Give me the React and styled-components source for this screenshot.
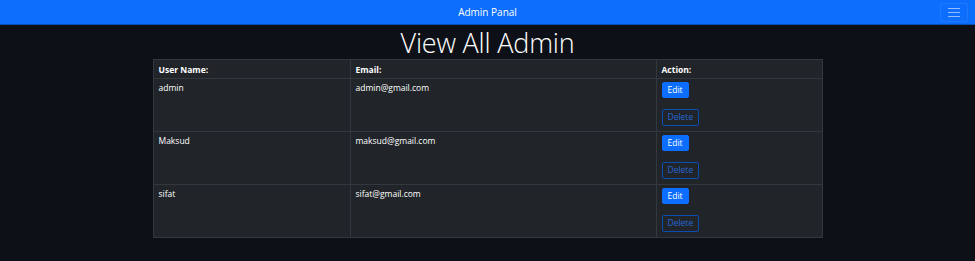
import React from 'react';
import styled, { createGlobalStyle } from 'styled-components';

const admins = [
  { name: 'admin', email: 'admin@gmail.com' },
  { name: 'Maksud', email: 'maksud@gmail.com' },
  { name: 'sifat', email: 'sifat@gmail.com' },
];

function App() {
  return (
    <>
      <GlobalStyle />
      <StNav>
        <StBrand>Admin Panal</StBrand>
        <StToggler aria-label="menu">
          <StBars>
            <span />
            <span />
            <span />
          </StBars>
        </StToggler>
      </StNav>
      <StMain>
        <StTitle>View All Admin</StTitle>
        <StTable>
          <colgroup>
            <col style={{ width: '197px' }} />
            <col style={{ width: '306px' }} />
            <col />
          </colgroup>
          <thead>
            <tr>
              <StTh>User Name:</StTh>
              <StTh>Email:</StTh>
              <StTh>Action:</StTh>
            </tr>
          </thead>
          <tbody>
            {admins.map((a) => (
              <tr key={a.email}>
                <StTd>{a.name}</StTd>
                <StTd>{a.email}</StTd>
                <StTd>
                  <StActions>
                    <StButton>Edit</StButton>
                    <StButton outline>Delete</StButton>
                  </StActions>
                </StTd>
              </tr>
            ))}
          </tbody>
        </StTable>
      </StMain>
    </>
  );
}

export default App;

const GlobalStyle = createGlobalStyle`
  html, body {
    margin: 0;
    padding: 0;
    background: #0d1117;
    font-family: "Open Sans", "Noto Sans", sans-serif;
    color: #dee2e6;
  }
`;

const StNav = styled.nav`
  position: relative;
  height: 24px;
  background: #0d6efd;
  border-bottom: 1px solid #0a4fb8;
  display: flex;
  align-items: center;
  justify-content: center;
`;

const StBrand = styled.div`
  color: #fff;
  font-size: 10px;
  line-height: 1;
`;

const StToggler = styled.button`
  position: absolute;
  right: 7px;
  top: 3px;
  width: 28px;
  height: 19px;
  padding: 0;
  background: transparent;
  border: 1px solid rgba(255, 255, 255, 0.08);
  border-radius: 3px;
  display: flex;
  align-items: center;
  justify-content: center;
`;

const StBars = styled.div`
  display: flex;
  flex-direction: column;
  gap: 3px;

  span {
    display: block;
    width: 12px;
    height: 1px;
    background: rgba(255, 255, 255, 0.55);
  }
`;

const StMain = styled.main`
  display: flex;
  flex-direction: column;
  align-items: center;
`;

const StTitle = styled.h1`
  margin: 2px 0 0;
  height: 32px;
  font-size: 27px;
  font-weight: 300;
  line-height: 32px;
  color: #fff;
  letter-spacing: -0.2px;
`;

const StTable = styled.table`
  width: 670px;
  border-collapse: collapse;
  background: #212529;
  table-layout: fixed;
  font-size: 8.5px;
  color: #fff;
`;

const StTh = styled.th`
  height: 18px;
  padding: 0 5px;
  border: 1px solid #32383e;
  text-align: left;
  font-weight: 700;
  vertical-align: middle;
`;

const StTd = styled.td`
  height: 53px;
  padding: 3px 5px;
  border: 1px solid #32383e;
  vertical-align: top;
  box-sizing: border-box;
`;

const StActions = styled.div`
  display: flex;
  flex-direction: column;
  align-items: flex-start;
  gap: 11px;
`;

const StButton = styled.button`
  font-family: inherit;
  font-size: 8.5px;
  line-height: 1;
  padding: 0 5px;
  height: ${(p) => (p.outline ? '17px' : '16px')};
  border-radius: 2px;
  border: 1px solid ${(p) => (p.outline ? '#0b4db0' : '#0d6efd')};
  background: ${(p) => (p.outline ? 'transparent' : '#0d6efd')};
  color: ${(p) => (p.outline ? '#2566d6' : '#fff')};
`;
